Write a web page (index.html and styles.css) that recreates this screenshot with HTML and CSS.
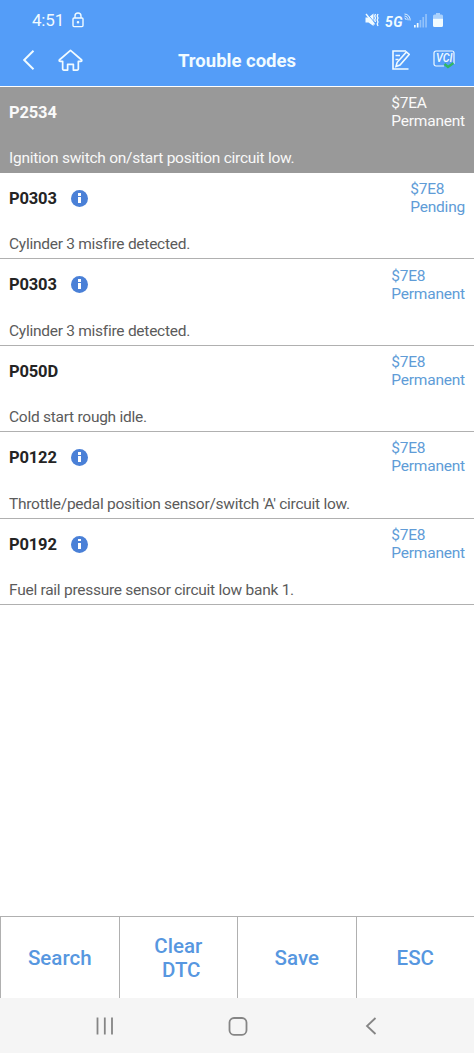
FILE: index.html
```
<!DOCTYPE html>
<html lang="en">
<head>
<meta charset="utf-8">
<title>Trouble codes</title>
<link rel="stylesheet" href="styles.css">
</head>
<body>
<div class="screen">
  <header class="header">
    <div class="status">
      <span class="time">4:51</span>
      <svg class="lock" width="12" height="16" viewBox="0 0 12 16" fill="none" stroke="currentColor" stroke-width="1.4"><rect x="1" y="6" width="10" height="8.600" rx="1"/><path d="M3 6V4a3 3 0 0 1 6 0v2"/><circle cx="6" cy="10.200" r=".6" fill="currentColor"/></svg>
      <svg class="mute" width="14" height="16" viewBox="0 0 14 16"><path d="M.5 5.500h3L8.500 1.500v12.500L3.500 10.500h-3z" fill="currentColor"/><path d="M2.500 2.300 10.500 11.500" stroke="#549df8" stroke-width="1"/><path d="M1 2 9.500 12.500" fill="none" stroke="currentColor" stroke-width="1.400"/><path d="M10.500 2l-.8 2 .8 2-.8 2 .8 2M13 2l-.8 2 .8 2-.8 2 .8 2-.8 2 .8 2" fill="none" stroke="currentColor" stroke-width="1.300"/></svg>
      <span class="net">5G</span>
      <svg class="waves" width="7" height="8" viewBox="0 0 7 8" fill="none" stroke="currentColor" stroke-width=".9"><path d="M.5 1a5.800 5.800 0 0 1 5.600 6.500M.5 3a3.900 3.900 0 0 1 3.600 4.300M.5 5a2 2 0 0 1 1.700 2"/></svg>
      <svg class="signal" width="13" height="14" viewBox="0 0 13 14" fill="currentColor"><path d="M0 11h1.700v2.500H0zM2.800 9h1.700v4.500H2.800z"/><path opacity=".4" d="M5.600 6h1.700v7.500H5.600zM8.400 3h1.700v10.500H8.400zM11.200 0h1.700v13.500h-1.700z"/></svg>
      <svg class="battery" width="10" height="14" viewBox="0 0 10 14" fill="currentColor"><path opacity=".55" d="M3 0h4v1.500h1.500A1.500 1.500 0 0 1 10 3v2.500H0V3a1.500 1.500 0 0 1 1.500-1.500H3z"/><path d="M0 5.500h10v7A1.500 1.500 0 0 1 8.500 14h-7A1.500 1.500 0 0 1 0 12.500z"/></svg>
    </div>
    <div class="titlebar">
      <svg class="back" width="12" height="20" viewBox="0 0 12 20" fill="none" stroke="currentColor" stroke-width="1.900"><path d="M10.500.8 1.200 10l9.300 9.200"/></svg>
      <svg class="home" width="25" height="22" viewBox="0 0 26 23" fill="none" stroke="currentColor" stroke-width="1.800" stroke-linejoin="round"><path d="M13 1.500 1.300 11.500q-.5 1.500 1 1.500h2.500v8q0 1 1 1h4.200v-6h6v6h4.200q1 0 1-1v-8h2.500q1.500 0 1-1.500z"/></svg>
      <h1 class="title">Trouble codes</h1>
      <svg class="edit" width="18" height="20" viewBox="0 0 18 20" fill="none" stroke="currentColor" stroke-width="1.600"><path d="M14 1H1v18h15.500M3.500 5.500H8M3.500 9.500h3"/><path d="M14.500 2 17.200 4.400 8 15l-4 1.500 1.200-4.200z"/></svg>
      <svg class="vci" width="22" height="19" viewBox="0 0 22 19"><path d="M11 16H3a2 2 0 0 1-2-2V3a2 2 0 0 1 2-2h16a2 2 0 0 1 2 2v11" fill="none" stroke="currentColor" stroke-width="1.200"/><text class="vci-text" x="3" y="12" textLength="16.500" lengthAdjust="spacingAndGlyphs">VCI</text><path d="m11.500 14 3.500 3 5.500-4" fill="none" stroke="#31b765" stroke-width="2.400"/></svg>
    </div>
  </header>

  <main class="codes">
    <section class="row selected"><b class="code">P2534</b><div class="state">$7EA<br>Permanent</div><p class="desc">Ignition switch on/start position circuit low.</p></section>
    <section class="row"><b class="code">P0303<i class="info"></i></b><div class="state">$7E8<br>Pending</div><p class="desc">Cylinder 3 misfire detected.</p></section>
    <section class="row"><b class="code">P0303<i class="info"></i></b><div class="state">$7E8<br>Permanent</div><p class="desc">Cylinder 3 misfire detected.</p></section>
    <section class="row"><b class="code">P050D</b><div class="state">$7E8<br>Permanent</div><p class="desc">Cold start rough idle.</p></section>
    <section class="row"><b class="code">P0122<i class="info"></i></b><div class="state">$7E8<br>Permanent</div><p class="desc">Throttle/pedal position sensor/switch 'A' circuit low.</p></section>
    <section class="row"><b class="code">P0192<i class="info"></i></b><div class="state">$7E8<br>Permanent</div><p class="desc">Fuel rail pressure sensor circuit low bank 1.</p></section>
  </main>

  <div class="actions">
    <button class="action">Search</button>
    <button class="action"><span>Clear<br><span class="dtc">DTC</span></span></button>
    <button class="action">Save</button>
    <button class="action">ESC</button>
  </div>
  <nav class="nav">
    <svg width="18" height="18" viewBox="0 0 18 18" fill="none" stroke="currentColor" stroke-width="1.800"><path d="M1.500.5v17M8.800.5v17M16 .5v17"/></svg>
    <svg width="20" height="19" viewBox="0 0 20 19" fill="none" stroke="currentColor" stroke-width="1.800"><rect x="1.500" y="1" width="17" height="16.800" rx="4.500"/></svg>
    <svg width="12" height="18" viewBox="0 0 12 18" fill="none" stroke="currentColor" stroke-width="1.800"><path d="M10.500 1 2 9l8.500 8"/></svg>
  </nav>
</div>
</body>
</html>
```
FILE: styles.css
```
* { box-sizing: border-box; }
body { margin: 0; background: #fff; font-family: Roboto, "Liberation Sans", sans-serif; }
.screen { width: 474px; height: 1053px; display: flex; flex-direction: column; overflow: hidden; }
svg { display: block; flex: none; }

.header { height: 88px; flex: none; background: #549df8; color: #f1fbff; border-bottom: 1px solid #999; box-shadow: inset 0 -1px #fff; }
.status { height: 40px; display: flex; align-items: center; padding-left: 32px; }
.time { width: 40px; font-size: 17px; letter-spacing: -.2px; }
.mute { margin-left: 281px; }
.net { margin: 3px 0 0 6px; width: 19px; font-size: 14px; line-height: 16px; font-weight: 700; font-style: italic; letter-spacing: .5px; }
.waves { margin: -6px 0 0 0; }
.signal { margin: 1px 0 0 3px; }
.battery { margin-left: 6px; }
.titlebar { height: 40px; display: flex; align-items: center; padding-left: 23px; }
.home { margin: -1px 0 0 23px; }
.title { width: 118px; margin: 1px 0 0 95px; font-size: 18.500px; line-height: 24px; font-weight: 700; white-space: nowrap; }
.edit { margin-left: 96px; }
.vci { margin: -1px 0 0 23px; }
.vci-text { font-size: 13px; font-weight: 500; font-style: italic; fill: currentColor; }

.codes { flex: 1; }
.row { height: 86.400px; display: grid; grid-template-columns: 1fr auto; grid-template-rows: 58.400px auto; padding: 0 9px; border-bottom: 1px solid #b0b0b0; color: #5b5b5b; }
.row.selected { height: 85px; background: #999; color: #f8f8f8; border-bottom: 0; grid-template-rows: 57px auto; }
.code { display: flex; align-items: center; height: 51px; color: #242424; font-size: 16.500px; letter-spacing: -.15px; font-weight: 700; }
.selected .code { height: 49px; }
.selected .code, .selected .state { color: #fafafa; }
.info { position: relative; width: 17px; height: 17px; margin-left: 14px; border-radius: 50%; background: #4a80d7; }
.info::before { content: ""; position: absolute; left: 7px; top: 3px; width: 3px; height: 2.500px; background: #fff; }
.info::after { content: ""; position: absolute; left: 7px; top: 7px; width: 3px; height: 6px; background: #fff; }
.state { padding-top: 7.300px; font-size: 15.500px; letter-spacing: -.2px; line-height: 18px; color: #609cd7; }
.selected .state { padding-top: 6px; }
.desc { grid-column: 1 / 3; margin: 3px 0 0; font-size: 15.500px; letter-spacing: -.26px; line-height: 20px; white-space: nowrap; }

.actions { height: 82px; flex: none; display: grid; grid-template-columns: repeat(4, 1fr); border-top: 1px solid #b0b0b0; }
.action { padding: 1px 0 0; border: 0; border-left: 1px solid #b0b0b0; background: #fff; color: #5797e0; font: 500 20.500px/24px Roboto, sans-serif; }
.dtc { margin-left: 6px; }
.nav { height: 55px; flex: none; display: grid; grid-template-columns: 1fr 1fr 1fr; justify-items: center; align-items: center; padding: 1px 37px 0 39px; background: #f5f5f5; color: #858585; }
```
